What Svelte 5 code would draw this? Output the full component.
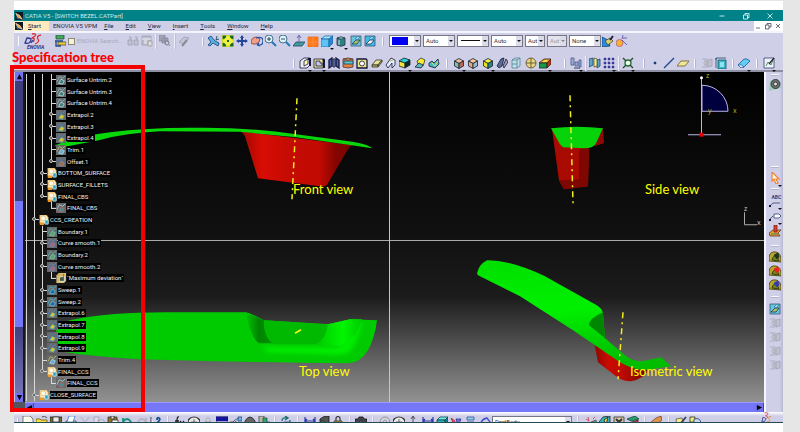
<script>
  const iso = (a, b, c) => [
    ['M1.5 4 6 1.5 10.5 4 6 6.5Z', a, '#123'],
    ['M1.5 4V9L6 11.5V6.5Z', b, '#123'],
    ['M10.5 4V9L6 11.5V6.5Z', c, '#123']
  ];
  const cylinder = (a, b) => [
    ['M2 3V10Q6 12.5 10 10V3Z', b, '#234'],
    ['M2 3Q6 .5 10 3Q6 5.5 2 3Z', a, '#234'],
    ['M4 5V10', 'none', '#fff']
  ];
  const scene = (a, b) => [
    ['M1 1H11V11H1Z', a, '#357'],
    ['M2 9 6 5H10L7 9Z', b, '#235'],
    ['M5 4 7 2H10L8 4Z', '#fff', '#28a']
  ];
  const slab = (a, b) => [
    ['M1 8 5 3H11L7 8Z', a, '#332'],
    ['M1 8V10H7V8ZM7 10 11 5V3L7 8Z', b, '#332']
  ];
  const hat = (a) => [
    ['M0 10V6Q1 0 7 1Q12 2 12 9V11Z', '#b9a52c', '#443c08'],
    ['M3 9Q4 4 8 5L10 10Z', '#6c8424', '#2c3008'],
    ['M5 4 9 2 10 6 8 8Z', a, a]
  ];
  const ghost = [
    ['M1 2H6V10H1M3 4H6M3 8H6', 'none', '#a4a3b4'],
    ['M7 3 11 2V9L7 10Z', '#c1c0d0', '#a3a2b4'],
    ['M3 5H5V7H3Z', '#eee', '#aaa']
  ];
  const tile = (a, b, c) => [
    ['M0 0H12V12H0Z', '#66686a', 'none'],
    ['M1 8 4 2 8 4 11 1', 'none', a],
    ['M3 10 6 5 10 7 8 11Z', b, c]
  ];

  const icons = {
    catia: [['M0 0H12V12H0Z', '#101820', 'none'], ['M1 2 7 5 11 11 4 8Z', '#f3a340', '#fff'], ['M1 7 4 11 7 11Z', '#2b80c8', 'none']],
    plane: [['M0 3 3 1 7 6 11 8 10 11 5 8 2 11 0 10 3 7Z', '#56b4dc', '#123f7c'], ['M9 1 8 5 11 4', 'none', '#135']],
    fit: [['M0 0H12V12H0Z', '#eef23c', '#9cae2a'], ['M1 1H4L3 3 1 4ZM11 1V4L9 3 8 1ZM1 11V8L3 9 4 11ZM11 11H8L9 9 11 8Z', '#17652f', '#17652f'], ['M5 5H7V7H5Z', '#17652f', 'none']],
    pan: [['M6 0 8 3H7V5H9V4L12 6 9 8V7H7V9H8L6 12 4 9H5V7H3V8L0 6 3 4V5H5V3H4Z', '#20459b', 'none']],
    rotate: [['M0 8Q0 2 6 2L9 4 8 7 5 9 2 9Z', '#f0a088', '#833'], ['M5 3Q12 1 12 6T6 10M6 10 8 8M6 10 9 11', 'none', '#1c52a7', 1.2]],
    zoomin: [['M0 4A4 4 0 1 0 8 4A4 4 0 1 0 0 4Z', '#d9f4fb', '#28526c'], ['M7 7 11 11', 'none', '#2776b8', 2], ['M2 4H6M4 2V6', 'none', '#123']],
    zoomout: [['M0 4A4 4 0 1 0 8 4A4 4 0 1 0 0 4Z', '#d9f4fb', '#28526c'], ['M7 7 11 11', 'none', '#2776b8', 2], ['M2 4H6', 'none', '#123']],
    normal: [['M0 11 3 7H12L9 11Z', '#3fa0a0', '#246'], ['M6 9V1M4 3 6 0 8 3', 'none', '#63519d']],
    orange: [['M1 2H11V12H1Z', '#ff7b20', '#f06a14'], ['M1 7H11M6 2V12', 'none', '#ff9440']],
    cube: [['M0 4 4 1H12L8 4Z', '#a8ecff', '#1d68a8'], ['M0 4H8V12H0Z', '#5ec4f8', '#1d68a8'], ['M8 4 12 1V8L8 12Z', '#2c86cc', '#1d68a8']],
    cylinder: cylinder('#8ed0cf', '#2f7f83'),
    scene: scene('#69c5df', '#a6c463'),
    scene2: scene('#43b9e8', '#eef4f7'),
    brush: [['M0 2 6 5 8 11 0 12Z', '#2a8be0', '#147'], ['M3 6 8 3 11 6 6 10Z', '#d9cf6b', '#443'], ['M8 5 11 1', 'none', '#223', 2]],
    wand: [['M0 8A3.500 3.500 0 1 0 7 8A3.500 3.500 0 1 0 0 8Z', '#f1b728', '#b58'], ['M6 5 11 10M7 0 6 4M7 3H11', 'none', '#5145a0']],
    tree: [['M2 0H10V4H2Z', '#45a65a', '#254'], ['M4 7H12V10H4Z', '#f0d33b', '#543'], ['M1 6H9M2 6V11H7', 'none', '#1d4a86', 1.3]],
    find: [['M1 5H5V10H1ZM7 5H11V10H7ZM2 2H4V5M8 2H10V5', '#c3c2d3', '#9f9eb2']],
    form: [['M1 1H10V10H1Z', '#bdbccd', '#9f9eb2'], ['M1 4H10M3 6H6M3 8H6', 'none', '#fff'], ['M7 6H11V11H7Z', '#ddd', '#999']],
    stack: [['M0 0H6V6H0ZM3 3H9V8H3Z', '#a5a4b6', '#87869a'], ['M6 8A2 2 0 1 0 10 8A2 2 0 1 0 6 8M10 10 11 11', '#ccd', '#667']],
    pen: [['M1 7 6 2 11 3 6 9Z', '#c5c4d5', '#9d9caf'], ['M4 11 9 5', 'none', '#8a8996', 2]],
    pad: [['M1 4 5 1H11V8L8 11H1Z', '#ededf6', '#15163c'], ['M5 4 9 2V7L5 9Z', '#fff9ba', '#15163c'], ['M9 2H11V9', 'none', '#15163c', 2]],
    pocket: [['M1 2H10V11H1Z', '#efe995', '#15163c'], ['M3 4H7V6H9V9H3Z', '#cac8e8', '#15163c'], ['M10 2 11 3V11', 'none', '#15163c', 2]],
    shaft: [['M1 3 4 1V9L1 11ZM8 1 11 3V11L8 9Z', '#4966a8', '#15163c', 1.3], ['M5 2H7V10H5Z', '#7c88bc', '#15163c']],
    groove: [['M1 2Q6 0 11 2V10Q6 12 1 10Z', '#e3813e', '#533'], ['M2 4H11V7H2Z', '#5bc5d0', '#245'], ['M1 2Q6 4 11 2', '#eee9a5', '#533']],
    hole: [['M1 2H10L11 3V11H1Z', '#eee785', '#15163c', 1.3], ['M3.5 6.5A2.5 2.5 0 1 0 8.5 6.5A2.5 2.5 0 1 0 3.5 6.5', '#fff', '#15163c']],
    rib: slab('#e6e1a0', '#bdb76b'),
    slot: [['M1 8 6 1 10 3V8L7 11V6L3 11Z', '#dfedff', '#15163c'], ['M5 4 8 3', '#f0dc3b', '#b8a720']],
    solid: [['M0 4 5 1 11 3 6 6Z', '#28d4d4', '#123'], ['M0 4V9L6 11V6Z', '#f1e134', '#123'], ['M11 3V8L6 11V6Z', '#0e2a26', '#123']],
    loft: [['M3 4 7 1 11 3 9 9 4 7Z', '#f3ed35', '#333'], ['M1 10 5 6 9 8 7 11Z', '#5dbebe', '#15163c']],
    loft2: [['M1 9V6L4 4 6 6 10 2 11 7 7 11Z', '#49b8bf', '#15163c'], ['M4 6 7 9 10 4', 'none', '#f2e550']],
    fillet: iso('#f3bd9b', '#8fb8a1', '#b8665a'),
    chamfer: iso('#ffc58f', '#e3ac7a', '#9fb8ca'),
    draft: iso('#f5ef40', '#e9e322', '#27858a'),
    shell: [['M1 9 5 2 8 1 6 9 3 11Z', '#546f98', '#15163c'], ['M7 9 10 2 12 5 8 11Z', '#a6a0a8', '#15163c']],
    thick: [['M2 3H7V11H2ZM7 3 10 1V9L7 11M2 3 5 1H10M2 7H7', '#bfe0e5', '#56809a']],
    thread: [['M1 6A5 5 0 1 0 11 6A5 5 0 1 0 1 6', '#e6d584', '#544925'], ['M6 1V11M1 6H11', 'none', '#544925']],
    face: [['M0 6 5 2H12L8 6Z', '#eb9c2e', '#321'], ['M0 6H8V11H0Z', '#18964c', '#132'], ['M8 6 12 2V7L8 11Z', '#b53617', '#321'], ['M3 5 6 3H9L7 5Z', '#f4e34a', 'none']],
    mirror: [['M1 1H4V8H1ZM5 5H8V9H5ZM9 3H11V10H9Z', '#9cb0d4', '#46568d'], ['M4 11H10', 'none', '#15163c']],
    pattern: [['M0 2 4 1V8L0 10ZM8 3 11 2V9L8 11Z', '#5fa5c5', '#254267'], ['M5 1 8 2V9L5 10Z', '#f3ee9b', '#553']],
    grid: [['M1 1H3V3H1ZM5 1H7V3H5ZM9 1H11V3H9ZM1 5H3V7H1ZM5 5H7V7H5ZM9 5H11V7H9ZM1 9H3V11H1ZM5 9H7V11H5ZM9 9H11V11H9Z', '#3a3a9c', '#3a3a9c', 0.5]],
    scale: [['M3 6A3 3 0 1 0 9 6A3 3 0 1 0 3 6', '#eefff0', '#20702f', 1.3], ['M1 1 4 4M11 1 8 4M1 11 4 8M11 11 8 8', 'none', '#244a2a', 1.3]],
    point: [['M5 5H7V7H5Z', '#1e3a78', '#1e3a78', 0.5]],
    line: [['M1 11 11 1', 'none', '#1b448c', 1.3]],
    planar: [['M0 9 4 4H12L8 9Z', '#f1e79b', '#6e5c22']],
    ghost,
    asm: [['M1 3V1H11M1 1V11', 'none', '#204a60'], ['M3 3H11V12H3Z', '#3ab5ca', '#1a5065'], ['M5 5H9V10H5Z', '#8de3f0', 'none']],
    eraser: [['M0 8 6 2Q9 1 12 4L6 10Q2 12 0 8Z', '#63cdf1', '#175da3'], ['M0 8Q4 7 6 10 2 12 0 8', '#fff', '#175da3']],
    sketch: [['M1 1H11V11H1Z', '#f1f1fa', '#35406c'], ['M3 9 5 5 8 8 10 3', 'none', '#247a48'], ['M6 7 11 1', 'none', '#222', 1.3]],
    gear: [['M0 12 1 2 9 0 12 9Z', '#9ccdb8', 'none'], ['M2 5A4.500 4.500 0 1 0 11 5A4.500 4.500 0 1 0 2 5', '#6b7470', '#222'], ['M4.5 5A2 2 0 1 0 8.500 5A2 2 0 1 0 4.500 5', '#ddd', '#222']],
    pick: [['M3 0V9L5 7 7 12 9 11 7 7H10Z', '#fff4e8', '#f08335', 1.2]],
    note: [['M1 11 4 8H11', 'none', '#304070'], ['M0 10H2V12H0Z', '#113', 'none']],
    flag: [['M1 9 4 6M10 4 12 6 10 8H5V4Z', '#fff', '#304070'], ['M0 9H2V11H0Z', '#113', 'none']],
    stamp: [['M0 8 4 5H12L9 8 11 11H1Z', '#e2a23a', '#5f3a1c'], ['M5 0H8V7H5Z', '#d83e2a', '#822'], ['M2 9H9', 'none', '#275']],
    hat1: hat('#1d3324'),
    hat2: hat('#f02020'),
    hat3: hat('#3338b8'),
    doc: [['M1 0H8L11 3V12H1Z', '#fffff0', '#555']],
    folder: [['M0 3H4L5 4H11V12H0Z', '#f4de48', '#6d5c10'], ['M6 1Q9 -1 11 2', 'none', '#333']],
    save: [['M0 1H12V12H0Z', '#6d6c2b', '#222'], ['M3 1H9V6H3Z', '#eee', '#333']],
    print: [['M1 5H11V11H1Z', '#bcc8dc', '#445'], ['M4 0H10L8 6H2Z', '#fff', '#347cc0']],
    cut: [['M2 1 9 11M10 1 3 11', 'none', '#a5a4b5']],
    copy: [['M1 1H6V9H1ZM5 4H11V12H5Z', '#dddce9', '#a09fb2']],
    paste: [['M1 1H10V12H1Z', '#8d7a22', '#333'], ['M4 0H7V3H4Z', '#ddd', '#333'], ['M5 4H11V12H5Z', '#fff', '#333']],
    undo: [['M2 2V7H6M2 6Q6 0 10 6V10', 'none', '#12937a', 1.8]],
    redo: [['M10 2V7H6M10 6Q6 0 2 6V10', 'none', '#b4b3c4', 1.8]],
    help: [['M1 1V9L3 7 5 11', '#fff', '#222'], ['M7 4Q7 1 9 2T8 6V8', 'none', '#16508d', 1.8]],
    fx: [['M5 1Q3 0 3 5V11M1 5H5M6 5 10 10M10 5 6 10', 'none', '#222', 1.3]],
    dial: [['M0 6A6 5 0 0 1 12 6V11H0Z', '#e8e8e8', '#333', 1.2], ['M3 6H9M6 3V11', 'none', '#555']],
    lock: [['M4 6V3Q6 0 8 3V6', 'none', '#aaa'], ['M3 6H9V12H3Z', '#bbb', '#888']],
    goldlock: [['M4 5V2Q6 -1 8 2V5', 'none', '#333', 1.2], ['M2 5H10V12H2Z', '#b7891d', '#443']],
    table: [['M0 1H12V12H0Z', '#fff', '#223'], ['M0 1H12V5H0Z', '#14149c', '#14149c']],
    graph: [['M1 8 5 4M5 4 9 2M5 5 9 8', 'none', '#345'], ['M8 1H12V5H8ZM8 7H12V10H8Z', '#6db1ee', '#247'], ['M0 6H4V10H0Z', '#e77', '#722']],
    knob: [['M1 5Q6-3 11 5L12 11H0Z', '#666', '#222'], ['M4 6A2 2 0 1 0 8 6', '#bbb', '#222']],
    chart: [['M1 0H6V11H1Z', '#b9b7a5', '#444'], ['M5 2H9V7H5Z', '#34a765', '#254'], ['M8 6H12V11H8Z', '#c9c9ee', '#448']],
    cycle: [['M2 5Q2 1 7 2M5 0 8 2 5 4M10 4V8', 'none', '#17706b', 1.3], ['M4 6H10V11H4Z', '#fff', '#34c']],
    measure: [['M1 1V9M11 1V9M1 5H11M3 3 1 5 3 7M9 3 11 5 9 7', 'none', '#3039a8', 1.2]],
    item: [['M2 3 7 0H11V12H2Z', '#555', '#111'], ['M3 5H6V8H3Z', '#4ba', '#222']],
    camera: [['M0 3H3L4 1H8L9 3H12V12H0Z', '#42434a', '#111'], ['M4 7A2 2 0 1 0 8 7A2 2 0 1 0 4 7', '#aaa', '#111']],
    mist: [['M1 8Q1 1 6 1T11 8V11H1Z', '#d2d1de', '#888'], ['M4 8Q4 4 6 4T8 8', 'none', '#888']],
    axis: [['M5 1V11M3 3 5 0 7 3', 'none', '#333']],
    box: [['M1 4 4 1H12L9 4Z', '#72f0f0', '#144'], ['M1 4H9V12H1Z', '#27b6be', '#144'], ['M9 4 12 1V9L9 12Z', '#147e88', '#144']],
    joint: [['M1 2 5 5 4 9Z', '#ef5070', '#a23'], ['M6 3H11L8 10Z', '#7070e0', '#338']],
    chain: [['M2 1H9V4H2ZM2 6H9V9H2Z', '#8cd3d8', '#3a51ad']],
    outline: [['M1 10Q2 3 8 2L11 6 8 11', 'none', '#3c4dd4', 1.3]],
    spark: [['M1 3 4 5M3 1 4 5M1 8 4 6', 'none', '#c33'], ['M6 6 11 4 12 9 7 11Z', '#35ab85', '#743'], ['M8 3 10 1', 'none', '#d33']],
    mesh: [['M0 6 4 1 11 0 11 8 6 12Z', '#31b6c2', '#222'], ['M5 4 9 1 7 9Z', '#f1da3b', '#222']],
    ball: [['M1 1H11V11H1Z', '#d7ca9a', '#333'], ['M3 3 9 9M9 3 3 9', 'none', '#334', 2]],
    books: [['M0 3 8 0 12 3 4 5Z', '#28a06a', '#144'], ['M2 7 11 4V8L4 11Z', '#c34430', '#422']],
    hammer: [['M0 7 6 2 11 0 12 4 7 8 5 6 2 10Z', '#dc9347', '#744']],
    edit: [['M1 3 7 2 9 10 2 11Z', '#ffed7f', '#555'], ['M6 7 11 1', 'none', '#345', 1.8]],
    edit2: [['M1 1H6V6H1Z', '#edf071', '#333'], ['M5 3Q12 1 12 8L9 11 5 10Z', '#c6d8ef', '#337']],
    untrim: tile('#8ad8e0', '#3f807c', '#d7f3f5'),
    extrapol: tile('#4d90d0', '#d6c630', '#3e9ac8'),
    trim: tile('#e0d660', '#6dacce', '#b9e6ee'),
    offset: tile('#4a78c6', '#a76b3b', '#6f96d6'),
    boundary: tile('#4ec6b0', '#5a9f70', '#83d0b5'),
    smooth: tile('#6c8edc', '#a26868', '#758bd1'),
    sweep: tile('#3ac7e4', '#2467a4', '#6ad4f0'),
    result: tile('#c8f0ef', '#468d92', '#cc5c5c'),
    set: [['M1 0H9L11 3V10H1Z', '#fff0cd', '#c68e37'], ['M2 4A3 3 0 1 0 8 4A3 3 0 1 0 2 4', '#fffbe5', '#e4a63c'], ['M7 6H11V11H7Z', '#27a2be', '#e9fbff'], ['M1 9H6V12H1Z', '#f09a24', 'none']],
    rule: [['M1 3 4 0H12V9L9 12H1Z', '#d6b05a', '#f2e3ae'], ['M4 5 10 4V10H4Z', '#405845', '#fff'], ['M9 1V5', 'none', '#d33']]
  };

  const menus = [['Start', 'S', 'tart'], ['ENOVIA V5 VPM', '', 'ENOVIA V5 VPM'], ['File', 'F', 'ile'], ['Edit', 'E', 'dit'], ['View', 'V', 'iew'], ['Insert', 'I', 'nsert'], ['Tools', 'T', 'ools'], ['Window', 'W', 'indow'], ['Help', 'H', 'elp']];

  const searchTools = [{ size: 28, icons: ['find', 'form'] }, { sep: 4 }, { size: 14, icons: ['stack'] }, { sep: 5 }, { size: 14, icons: ['pen'] }, { gap: 8 }, { grip: 8 },
    { size: 170, icons: ['plane', 'fit', 'pan', 'rotate', 'zoomin', 'zoomout', 'normal', 'orange', 'cube*', 'cylinder*', 'scene', 'scene2'] }, { grip: 12 }];
  const partTools = [{ grip: 8 }, { size: 143, icons: ['pad*', 'pocket*', 'shaft', 'groove', 'hole', 'rib', 'slot', 'solid*', 'loft', 'loft2'] }, { grip: 11 },
    { size: 100, icons: ['fillet*', 'chamfer', 'draft*', 'shell', 'thick', 'thread', 'face*'] }, { gap: 8 }, { grip: 9 }, { size: 14, icons: ['mirror*'] }, { sep: 5 },
    { size: 28, icons: ['pattern', 'grid*'] }, { sep: 5 }, { size: 14, icons: ['scale*'] }, { gap: 4 }, { grip: 9 }, { size: 42, icons: ['point', 'line', 'planar'] }, { grip: 10 },
    { size: 28, icons: ['ghost', 'asm'] }, { grip: 9 }, { size: 14, icons: ['eraser*'] }, { grip: 11 }, { size: 14, icons: ['sketch*'] }];
  const sideTools = [{ grip: 6 }, { size: 14, icons: ['gear'] }, { gap: 70 }, { grip: 9 }, { size: 14, icons: ['pick*'] }, { grip: 8 }, { size: 46, icons: ['note*', 'flag*', 'stamp'] },
    { gap: 2 }, { grip: 9 }, { size: 42, icons: ['hat1', 'hat2', 'hat3'] }, { grip: 10 }, { size: 70, icons: ['scene', 'ghost', 'ghost', 'ghost', 'ghost'] }];
  const fileTools = [{ grip: 7 }, { size: 142, icons: ['doc', 'folder', 'save', 'print', 'cut', 'copy', 'paste', 'undo', 'redo', 'help'] }, { sep: 10 },
    { size: 98, icons: ['fx', 'dial', 'lock', 'table', 'graph', 'knob', 'chart'] }, { sep: 8 }, { size: 14, icons: ['cycle'] }, { sep: 10 }, { size: 42, icons: ['measure', 'item', 'goldlock'] },
    { sep: 9 }, { size: 14, icons: ['camera'] }, { sep: 10 }, { size: 114, icons: ['mist', 'dial', 'axis', 'measure', 'box', 'joint', 'chain', 'outline'] }];
  const analysisTools = [{ sep: 12 }, { size: 56, icons: ['spark', 'mesh', 'ball', 'books'] }, { sep: 9 }, { size: 14, icons: ['hammer'] }, { sep: 11 }, { size: 28, icons: ['edit', 'edit2'] }];

  const tree = [
    [4, 'untrim', 'Surface Untrim.2'], [4, 'untrim', 'Surface Untrim.3'], [4, 'untrim', 'Surface Untrim.4'],
    [4, 'extrapol', 'Extrapol.2', 1], [4, 'extrapol', 'Extrapol.3', 1], [4, 'extrapol', 'Extrapol.4', 1],
    [4, 'trim', 'Trim.1'], [4, 'offset', 'Offset.1', 1],
    [3, 'set', 'BOTTOM_SURFACE', 1], [3, 'set', 'SURFACE_FILLETS', 1], [3, 'set', 'FINAL_CBS', 1], [4, 'result', 'FINAL_CBS'],
    [2, 'set', 'CCS_CREATION', 1], [3, 'boundary', 'Boundary.1'], [3, 'smooth', 'Curve smooth.1', 1], [3, 'boundary', 'Boundary.2'],
    [3, 'smooth', 'Curve smooth.2', 1], [4, 'rule', '`Maximum deviation`'], [3, 'sweep', 'Sweep.1', 1], [3, 'sweep', 'Sweep.2', 1],
    [3, 'extrapol', 'Extrapol.6', 1], [3, 'extrapol', 'Extrapol.7', 1], [3, 'extrapol', 'Extrapol.8', 1], [3, 'extrapol', 'Extrapol.9', 1],
    [3, 'trim', 'Trim.4'], [3, 'set', 'FINAL_CCS', 1], [4, 'result', 'FINAL_CCS'], [2, 'set', 'CLOSE_SURFACE', 1]
  ];
</script>

{#snippet icon(name)}
  <svg class="icon" viewBox="0 0 12 12" aria-hidden="true">
    {#each icons[name] as [d, fill, stroke, width]}
      <path {d} {fill} {stroke} stroke-width={width ?? 0.8} />
    {/each}
  </svg>
{/snippet}

{#snippet tools(items, column = false)}
  <div class="tools" class:column>
    {#each items as item}
      {#if item.icons}
        <div class="group" style:flex-basis="{item.size}px">
          {#each item.icons as entry}
            {@const name = entry.replace('*', '')}
            <button class="tool" aria-label={name}>
              {@render icon(name)}
              {#if name === 'note'}<span class="abc">ABC</span>{/if}
              {#if entry.endsWith('*')}<span class="more"></span>{/if}
            </button>
          {/each}
        </div>
      {:else}
        <span class="rule" class:grip={item.grip} class:sep={item.sep} style:flex-basis="{item.grip ?? item.sep ?? item.gap}px"></span>
      {/if}
    {/each}
  </div>
{/snippet}

{#snippet combo(label, value, kind = '')}
  <label class="combo {kind}">
    <select aria-label={label} disabled={kind.includes('off')}><option>{value}</option></select>
    {#if kind === 'colour'}<span class="swatch"></span>{/if}
    {#if kind === 'stroke'}<span class="dash"></span>{/if}
    <span class="arrow"></span>
  </label>
{/snippet}

<div class="page">
  <main class="window">
    <header class="title">
      {@render icon('catia')}
      <h1>CATIA V5 - [SWITCH BEZEL.CATPart]</h1>
      <div class="controls">
        <button aria-label="Minimize"><svg viewBox="0 0 8 8"><path d="M1.500 4H6.500" /></svg></button>
        <button aria-label="Restore"><svg viewBox="0 0 8 8"><path d="M1.500 3H5.500V7H1.500ZM3 3V1.500H7V5.500H5.500" /></svg></button>
        <button aria-label="Close"><svg viewBox="0 0 8 8"><path d="M1.500 1.500 6.500 6.500M6.500 1.500 1.500 6.500" /></svg></button>
      </div>
    </header>

    <nav class="menubar">
      <span class="mark">{@render icon('catia')}</span>
      {#each menus as [name, key, rest]}
        <button class="menu" class:start={name === 'Start'} class:vpm={!key}><u>{key}</u>{rest}</button>
      {/each}
      <div class="child-controls">
        <button aria-label="Minimize document"><svg viewBox="0 0 8 8"><path d="M2 6H6" /></svg></button>
        <button aria-label="Restore document"><svg viewBox="0 0 8 8"><path d="M1.500 3H5V7H1.500ZM3 3V1.500H7V5H5" /></svg></button>
        <button aria-label="Close document"><svg viewBox="0 0 8 8"><path d="M2 2 6 6M6 2 2 6" /></svg></button>
      </div>
    </nav>

    <div class="bars">
      <div class="bar">
        <span class="lead"></span>
        <svg class="enovia" viewBox="0 0 26 16" aria-label="ENOVIA" role="img">
          <path d="M8 1Q13 0 11 3L8 5Q12 5 9 9M17 2Q12 3 14 6T11 11" fill="none" stroke="#d9343c" stroke-width="1.300" />
          <path d="M1 10 3 5Q9 5 6 9Q5 11 1 10ZM7 10 9 7" fill="none" stroke="#2e3b91" stroke-width="1.300" />
          <text x="3" y="15.500">ENOVIA</text>
        </svg>
        <div class="search">
          {@render icon('tree')}
          <label><input type="checkbox" />ENOVIA Search...</label>
        </div>
        {@render tools(searchTools)}
        <div class="combos">
          {@render combo('Fill colour', '', 'colour')}
          {@render combo('Transparency', 'Auto')}
          {@render combo('Line style', '', 'stroke')}
          {@render combo('Line weight', 'Auto')}
          {@render combo('Point symbol', 'Aut', 'small')}
          {@render combo('Rendering', 'Aut', 'small off')}
          {@render combo('Layer', 'None')}
        </div>
        {@render tools([{ size: 28, icons: ['brush', 'wand'] }])}
      </div>
      <div class="bar part">{@render tools(partTools)}</div>
    </div>

    <div class="work">
      <div class="canvas">
        <div class="vscroll">
          <button aria-label="Scroll up"><svg viewBox="0 0 8 8"><path d="M4 1 7 7H1Z" /></svg></button>
          <span class="above"></span><span class="thumb"></span><span class="below"></span>
          <button aria-label="Scroll down"><svg viewBox="0 0 8 8"><path d="M4 7 7 1H1Z" /></svg></button>
        </div>
        <div class="stage">
          <svg viewBox="25 73 364 168" role="img" aria-label="Front view">
            <defs>
              <linearGradient id="fr"><stop offset="0" stop-color="#9c0800" /><stop offset=".2" stop-color="#d80d04" /><stop offset=".4" stop-color="#c60b03" /><stop offset=".7" stop-color="#c00a02" /><stop offset=".85" stop-color="#820500" /><stop offset="1" stop-color="#790500" /></linearGradient>
            </defs>
            <path fill="url(#fr)" d="M240 132 354 146Q350 146 348 150L328 184Q326 188 320 187L258 179 245 137Q243 133 240 132Z" />
            <path fill="#08d80a" d="M55 146Q76 137 110 133 150 128 197 128.500 250 128 296 135L345 141.500Q367 144 372 149L345 145 296 138 240 132.500 160 132Q125 134 103 140L94 142 57 149Z" />
            <path class="axis" d="M297 99 292 200" />
            <text class="caption" x="293" y="195">Front view</text>
          </svg>
          <svg viewBox="390 73 374 168" role="img" aria-label="Side view">
            <path fill="#8e0902" d="M603 129 604 144 594 147Z" />
            <path fill="#a90b02" d="M552 130 563 147H589L588 187 564 190 559 181Z" />
            <path fill="#7e0701" d="M559 181 579 180V150L589 147 588 187 564 190Z" />
            <path fill="#07d30a" d="M551 129Q577 126 603 129L596 144Q594 149 584 149L563 148 560 145Z" />
            <path class="axis" d="M570 96 573 204" />
            <path d="M702 86A26 26 0 0 1 728 112H702Z" fill="#00003f" stroke="#bdb5e6" />
            <path d="M701.500 78V135M688 135.500H721" stroke="#bdb5e6" />
            <circle cx="701.500" cy="78.500" r="1.500" fill="#fff" />
            <path d="M699.500 133.500H703.500V137.500H699.500Z" fill="#e00000" />
            <g class="letters"><text x="706" y="79">z</text><text x="708" y="114">y</text><text x="733" y="114">x</text></g>
            <path d="M744.500 213V225.500H757" fill="none" stroke="#aaa" />
            <g class="letters pale"><text x="744" y="212">z</text><text x="757" y="226">x</text></g>
            <text class="caption" x="645" y="195">Side view</text>
          </svg>
          <svg viewBox="25 242 364 160" role="img" aria-label="Top view">
            <defs>
              <linearGradient id="wall"><stop offset="0" stop-color="#00c800" /><stop offset=".45" stop-color="#008500" /><stop offset="1" stop-color="#009400" /></linearGradient>
              <linearGradient id="lip"><stop offset="0" stop-color="#00c900" /><stop offset=".6" stop-color="#00f500" /><stop offset="1" stop-color="#00c900" /></linearGradient>
              <filter id="soft"><feGaussianBlur stdDeviation="2" /></filter>
            </defs>
            <path fill="#00cb00" d="M56 332Q57 322 75 319 110 312 165 312H246Q251 313 264 320L328 324 350 319 377 320Q375 337 368 350 360 363 348 363 230 362 140 359 90 356 66 352 56 346 56 332Z" />
            <path filter="url(#soft)" fill="#00ee00" d="M262 347H335Q348 344 353 322H362Q358 340 350 351 344 356 330 354L268 352Z" />
            <path fill="url(#wall)" d="M245 312 264 320Q264 339 275 343H259Q252 340 245 312Z" />
            <path fill="#00b900" d="M264 320 328 324Q326 342 315 344H275Q264 340 264 320Z" />
            <path fill="url(#lip)" d="M328 324 350 319H362L356 334 340 346 315 344Q325 341 328 324Z" />
            <path d="M295 333 301 329.500" stroke="#f5f51a" stroke-width="1.500" />
            <text class="caption" x="299" y="376">Top view</text>
          </svg>
          <svg viewBox="390 242 374 160" role="img" aria-label="Isometric view">
            <defs>
              <linearGradient id="isor"><stop offset="0" stop-color="#8c0600" /><stop offset=".25" stop-color="#c90b02" /><stop offset=".5" stop-color="#bd0a02" /><stop offset="1" stop-color="#6d0400" /></linearGradient>
              <linearGradient id="isog" x2="0.150" y2="1"><stop offset="0" stop-color="#00df00" /><stop offset=".5" stop-color="#00f000" /><stop offset="1" stop-color="#00bd00" /></linearGradient>
            </defs>
            <path fill="url(#isor)" d="M594 341 632 366H651Q644 379 631 381 622 381 616 376L598 362Z" />
            <path fill="url(#isog)" d="M477 273Q479 264 487 260 511 260 545 276L595 304Q603 308 603 314L605 338 625 355Q632 361 642 361L661 357 671 366 644 370Q630 369 617 360L573 330 520 296 480 276Q477 275 477 273Z" />
            <path fill="#008700" d="M603 312 605 338 589 325Q589 318 603 312Z" />
            <path class="axis" d="M623 312 618 379" />
            <text class="caption" x="630" y="376">Isometric view</text>
          </svg>
          <div class="tree">
            <svg class="wires" viewBox="0 0 60 28" preserveAspectRatio="none" aria-hidden="true">
              <path d="M1.500 0V28M9.500 0V28M17.500 0V10.500M17.500 13V25.500M26.500 0V7.500M26.500 10.700V11.500H31M26.500 16.700V17.500H31M26.500 25.700V26.500H31" />
            </svg>
            <ul>
              {#each tree as [level, kind, label, node]}
                <li class="l{level}">
                  <span class="branch" class:node></span>
                  {@render icon(kind)}
                  <span class="name">{label}</span>
                </li>
              {/each}
            </ul>
          </div>
        </div>
        <div class="corner"></div>
        <div class="hscroll">
          <button aria-label="Scroll left"><svg viewBox="0 0 8 8"><path d="M1 4 7 1V7Z" /></svg></button>
          <button aria-label="Scroll right"><svg viewBox="0 0 8 8"><path d="M7 4 1 1V7Z" /></svg></button>
        </div>
      </div>
      <aside class="side">{@render tools(sideTools, true)}</aside>
    </div>

    <footer class="status">
      {@render tools(fileTools)}
      <div class="body-pick">{@render combo('Active body', 'PartBody', 'wide')}</div>
      {@render tools(analysisTools)}
      <svg class="ds" viewBox="0 0 12 12" aria-label="DS" role="img">
        <path d="M4 1Q9 0 7 3L5 4Q9 5 6 7" fill="none" stroke="#e0434b" />
        <path d="M11 5Q7 5 9 8T6 11" fill="none" stroke="#ee8a2c" />
        <path d="M2 6Q7 6 4 10L1 11Z" fill="none" stroke="#3a4597" />
      </svg>
    </footer>

    <div class="callout"><strong>Specification tree</strong></div>
  </main>
</div>

<style>
  :global(body) { margin: 0; background: #e6e6e6; }
  .page { box-sizing: border-box; height: 100vh; min-height: 432px; padding: 1px 17px 0 14px; overflow: hidden; font-family: Roboto, "Noto Sans", sans-serif; font-size: 6px; line-height: 8px; color: #25253a; }
  .window { position: relative; box-sizing: border-box; height: 100%; display: flex; flex-direction: column; padding: 9px 0; background: #fff; }
  button { padding: 0; border: 0; background: none; font: inherit; color: inherit; display: flex; align-items: center; justify-content: center; }
  h1 { margin: 0; font: inherit; }
  .icon { display: block; width: 12px; height: 12px; flex: none; }

  .title { flex: 0 0 11px; display: flex; align-items: center; gap: 2px; padding-left: 1px; background: #008288; color: #cfe9ea; }
  .title .icon, .mark .icon { width: 8px; height: 8px; }
  .controls { margin-left: auto; display: flex; gap: 16px; padding-right: 9px; }
  .controls svg { width: 8px; height: 8px; display: block; fill: none; stroke: #e8ffff; stroke-width: 0.8; }

  .menubar { flex: 0 0 10px; display: flex; align-items: stretch; background: #d0cfe8; border-bottom: 2px solid #f4f4fc; }
  .mark { display: flex; align-items: center; padding: 0 1px; background: #fdf0cf; }
  .menu { padding: 0 6px; }
  .menu u { text-underline-offset: 1px; }
  .menu.start { padding: 0 8px 0 4px; background: #ffe9bf; }
  .menu.vpm { padding: 0 1px 0 4px; }
  .child-controls { margin-left: auto; display: flex; gap: 2px; padding-right: 1px; background: #fff; }
  .child-controls svg { width: 8px; height: 8px; display: block; fill: none; stroke: #445; stroke-width: 0.8; }

  .bars { flex: 0 0 39px; background: #d0cfe8; border-bottom: 2px solid #8f8fa4; box-sizing: border-box; }
  .bar { display: flex; align-items: center; height: 16px; }
  .bar.part { box-sizing: border-box; height: 21px; padding: 7px 0 0 276px; }
  .lead { width: 4px; height: 10px; margin-right: 5px; border-right: 1px solid #f8f8ff; }
  .enovia { width: 26px; height: 16px; flex: none; margin-right: 4px; }
  .enovia text { font: italic bold 5px Roboto, sans-serif; fill: #2a2f7a; }
  .search { flex: 0 0 72px; display: flex; align-items: center; gap: 2px; color: #a9a8bd; white-space: nowrap; }
  .search label { display: flex; align-items: center; gap: 2px; }
  .search input { appearance: none; box-sizing: border-box; width: 7px; height: 7px; margin: 0; border: 1px solid #8c8a78; background: #f6f1d8; }

  .tools, .group { display: flex; align-items: center; }
  .group { flex: none; justify-content: space-around; }
  .column, .column .group { flex-direction: column; }
  .tool { position: relative; width: 14px; height: 14px; flex: 0 1 14px; }
  .more { position: absolute; right: 0; bottom: -2px; border: 2px solid transparent; border-top-color: #111; border-bottom: 0; }
  .abc { position: absolute; top: 0; left: 4px; font-size: 5px; line-height: 7px; font-weight: 700; color: #3a3f78; }
  .rule { flex: none; display: flex; align-items: center; justify-content: center; }
  .grip::before { content: ""; width: 1px; height: 9px; background: #f8f8ff; border-right: 1px solid #b4b3cb; }
  .sep::before { content: ""; width: 1px; height: 15px; background: #eeeefa; border-right: 1px solid #c0bfd6; }
  .column .grip::before { width: 8px; height: 1px; border-right: 0; border-bottom: 1px solid #b4b3cb; }

  .combos { display: flex; gap: 2px; }
  .combo { position: relative; display: block; width: 32px; height: 12px; }
  .combo.small { width: 20px; }
  .combo select { appearance: none; display: block; box-sizing: border-box; width: 100%; height: 100%; margin: 0; padding: 0 6px 0 2px; border: 1px solid #777684; border-radius: 0; background: #fff; color: #333; font: inherit; opacity: 1; }
  .combo.off select { background: #e4e3ee; color: #999; }
  .swatch { position: absolute; left: 3px; top: 2px; width: 16px; height: 8px; background: #0000f0; pointer-events: none; }
  .dash { position: absolute; left: 4px; top: 5px; width: 19px; height: 1px; background: #111; pointer-events: none; }
  .arrow { position: absolute; right: 1px; top: 1px; bottom: 1px; width: 6px; display: flex; align-items: center; justify-content: center; background: #dcdbea; pointer-events: none; }
  .arrow::before { content: ""; border: 2px solid transparent; border-top-color: #111; border-bottom: 0; }
  .off .arrow::before { border-top-color: #888; }

  .work { flex: 1; min-height: 0; display: flex; }
  .canvas { flex: 1; min-width: 0; display: grid; grid-template-columns: 11px 1fr; grid-template-rows: 1fr 10px; }
  .vscroll { display: flex; flex-direction: column; border-left: 1px solid #c6c6e8; border-right: 2px solid #17171c; background: #3d3d7c; }
  .vscroll button, .hscroll button { flex: 0 0 9px; background: #7272ee; }
  .vscroll svg, .hscroll svg { width: 7px; height: 7px; fill: #050510; display: block; }
  .above { flex: 120; }
  .thumb { flex: 126; background: #7777fa; }
  .below { flex: 66; background: linear-gradient(#404080, #7474b4); }
  .corner { background: #55555f; }
  .hscroll { display: flex; justify-content: space-between; background: #7676f8; border-top: 1px solid #9c9cff; }
  .hscroll button { border-right: 1px solid #4444a0; }

  .stage { position: relative; display: grid; grid-template-columns: 364fr 374fr; grid-template-rows: 168fr 160fr; gap: 1px; min-height: 0; min-width: 0; background: linear-gradient(#c4c4c4, #c4c4c4) 49.3% 0 / 1px 100% no-repeat, linear-gradient(#aaa, #aaa) 0 51.2% / 100% 1px no-repeat, linear-gradient(#000, #111 50%, #1b1b1b 68%, #929292); }
  .stage > svg { display: block; width: 100%; height: 100%; min-width: 0; min-height: 0; }
  .axis { fill: none; stroke: #f2ee20; stroke-width: 1.5; stroke-dasharray: 6 4 2 4; }
  .caption { font: 13px Lato, sans-serif; fill: #ffff00; }
  .letters { font: 7px "Open Sans", sans-serif; fill: #b8b020; }
  .letters.pale { fill: #ccc; }

  .tree { position: absolute; inset: 2px auto 1px 0; width: 118px; }
  .tree ul { height: 100%; margin: 0; padding: 0; list-style: none; display: grid; grid-template-rows: repeat(28, 1fr); }
  .wires { position: absolute; left: 0; top: 0; width: 60px; height: 100%; }
  .wires path { fill: none; stroke: #d8d8d8; stroke-width: 1; vector-effect: non-scaling-stroke; }
  .tree li { position: relative; display: flex; align-items: center; min-height: 0; color: #f2f2f2; white-space: nowrap; }
  .l2 { padding-left: 9px; }
  .l3 { padding-left: 17px; }
  .l4 { padding-left: 26px; }
  .branch { width: 5px; height: 1px; background: #d8d8d8; flex: none; }
  .branch.node::before { content: ""; display: block; box-sizing: border-box; width: 4px; height: 4px; margin: -2px 0 0 -2px; border: 1px solid #c2c2c2; border-radius: 2px; background: #444; }
  .tree .icon { width: 10px; height: 10px; margin-right: 1px; }
  .name { background: #000; line-height: 8px; padding: 0 1px 0 0; }

  .side { flex: 0 0 17px; background: linear-gradient(90deg, #d0cfe8 80%, #b9b8d4); border-left: 2px solid #f6f6ff; }
  .status { flex: 0 0 11px; box-sizing: border-box; display: flex; align-items: flex-start; padding: 3px 11px 0 0; overflow: hidden; background: linear-gradient(#fff, #d0cfe8 4px); border-bottom: 1px solid #234b55; }
  .status .sep::before { height: 12px; }
  .body-pick { flex: 0 0 80px; padding-top: 1px; }
  .combo.wide { width: 80px; }
  .ds { width: 11px; height: 11px; margin: -3px 0 0 auto; }

  .callout { position: absolute; left: -4px; top: 64px; bottom: 20px; width: 127px; border: 4px solid #f40000; pointer-events: none; }
  .callout strong { position: absolute; left: -2px; bottom: 100%; padding-bottom: 5px; font: 900 13px/14px Lato, sans-serif; color: #fa0000; white-space: nowrap; }
</style>
